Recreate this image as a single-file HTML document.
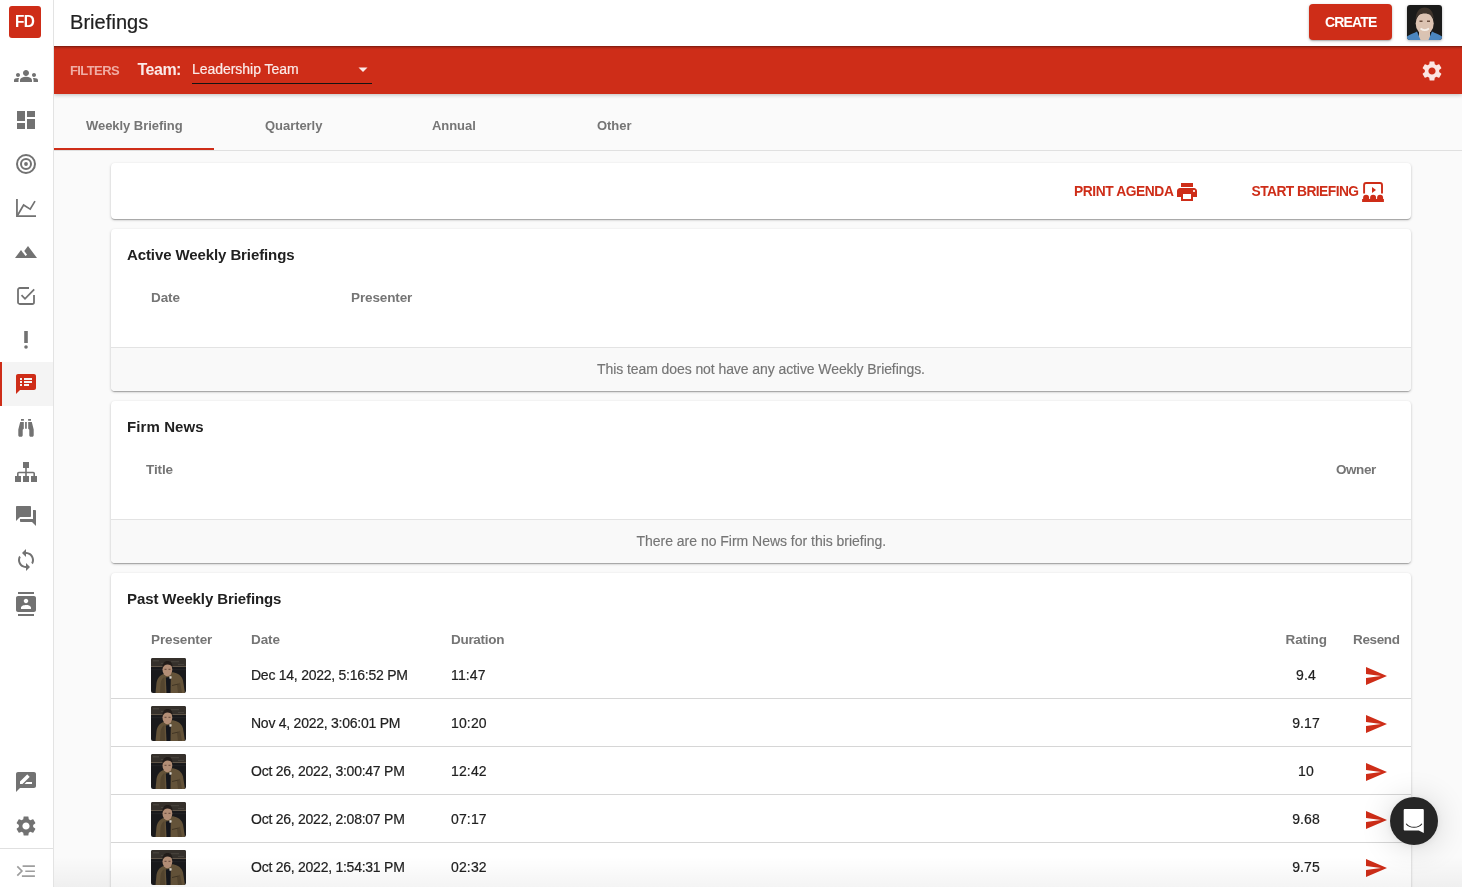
<!DOCTYPE html>
<html><head><meta charset="utf-8">
<style>
*{box-sizing:border-box;margin:0;padding:0}
html,body{width:1462px;height:887px;overflow:hidden;will-change:transform;background:#fafafa;font-family:"Liberation Sans",sans-serif;position:relative}
.a{position:absolute}
.t{position:absolute;white-space:nowrap;line-height:1}
.b{font-weight:bold}
#side{left:0;top:0;width:54px;height:887px;background:#fff;border-right:1px solid #e3e3e3}
#hdr{left:54px;top:0;width:1408px;height:46px;background:#fff}
#bar{left:54px;top:46px;width:1408px;height:48px;background:#ce2d18;z-index:2;box-shadow:0 1px 4px rgba(0,0,0,.24);clip-path:inset(0 0 -10px 0)}
#tabs{left:54px;top:94px;width:1408px;height:57px;background:#fafafa;border-bottom:1px solid #e0e0e0}
.card{position:absolute;left:111px;width:1300px;background:#fff;border-radius:4px;box-shadow:0 1px 3px rgba(0,0,0,.2),0 1px 1px rgba(0,0,0,.14),0 2px 1px -1px rgba(0,0,0,.12)}
.foot{position:absolute;left:0;width:1300px;height:44px;background:#f9f9f9;border-top:1px solid #e3e3e3;border-radius:0 0 4px 4px}
.gray{color:#757575}
.dark{color:#212121}
.dark:not(.b){-webkit-text-stroke:0.2px #212121}
.gray:not(.b){-webkit-text-stroke:0.15px #757575}
.ic{position:absolute;fill:#727272}
.row{position:absolute;left:0;width:1300px;height:1px;background:#d6d6d6}
</style></head><body><div id="root" style="position:absolute;left:0;top:0;width:1462px;height:887px;overflow:hidden">

<!-- sidebar -->
<div id="side" class="a">
  <div class="a" style="left:9px;top:6px;width:32px;height:32px;background:#ce2d18;border-radius:3px"></div>
  <div class="t b" style="left:15px;top:14px;font-size:16px;color:#fff;letter-spacing:-0.6px;transform:scaleX(.96);transform-origin:0 0">FD</div>

  <div class="a" style="left:0;top:362px;width:53px;height:44px;background:#f4f4f4"></div>
  <div class="a" style="left:0;top:362px;width:2px;height:44px;background:#ce2d18"></div>

  <!-- groups -->
  <svg class="ic" style="left:14px;top:64px" width="24" height="24" viewBox="0 0 24 24"><path d="M12 12.75c1.63 0 3.070.39 4.24.9 1.08.48 1.76 1.56 1.76 2.73V18H6v-1.61c0-1.18.68-2.26 1.760-2.73 1.17-.52 2.61-.91 4.240-.91zM4 13c1.1 0 2-.9 2-2s-.9-2-2-2-2 .9-2 2 .9 2 2 2zm1.13 1.1c-.37-.06-.74-.1-1.13-.1-.99 0-1.93.21-2.78.58C.48 14.9 0 15.62 0 16.43V18h4.5v-1.61c0-.83.23-1.61.63-2.29zM20 13c1.1 0 2-.9 2-2s-.9-2-2-2-2 .9-2 2 .9 2 2 2zm4 3.43c0-.81-.48-1.53-1.22-1.85-.85-.37-1.79-.58-2.78-.58-.39 0-.76.04-1.13.1.4.68.63 1.46.63 2.29V18H24v-1.57zM12 6c1.66 0 3 1.34 3 3s-1.34 3-3 3-3-1.34-3-3 1.34-3 3-3z"/></svg>
  <!-- dashboard -->
  <svg class="ic" style="left:14px;top:108px" width="24" height="24" viewBox="0 0 24 24"><path d="M3 13h8V3H3v10zm0 8h8v-6H3v6zm10 0h8V11h-8v10zm0-18v6h8V3h-8z"/></svg>
  <!-- target -->
  <svg class="ic" style="left:14px;top:152px" width="24" height="24" viewBox="0 0 24 24"><circle cx="12" cy="12" r="9" fill="none" stroke="#727272" stroke-width="2"/><circle cx="12" cy="12" r="5" fill="none" stroke="#727272" stroke-width="2"/><circle cx="12" cy="12" r="1.9"/></svg>
  <!-- chart -->
  <svg class="ic" style="left:14px;top:196px" width="24" height="24" viewBox="0 0 24 24"><path d="M2.95 3v17.15H22" fill="none" stroke="#727272" stroke-width="1.8"/><path d="M3.6 19.2L9.6 9l6.6 4.1 4.8-8" fill="none" stroke="#727272" stroke-width="1.7"/></svg>
  <!-- terrain -->
  <svg class="ic" style="left:14px;top:240px" width="24" height="24" viewBox="0 0 24 24"><path d="M14 6l-3.75 5 2.85 3.8-1.6 1.2C9.81 13.75 7 10 7 10l-6 8h22L14 6z"/></svg>
  <!-- checkbox -->
  <svg class="ic" style="left:14px;top:284px" width="24" height="24" viewBox="0 0 24 24"><path d="M15 4H5.8a1.8 1.8 0 0 0-1.8 1.8v12.4a1.8 1.8 0 0 0 1.8 1.8h12.4a1.8 1.8 0 0 0 1.8-1.8v-7.2" fill="none" stroke="#727272" stroke-width="1.8"/><path d="M7.5 11.2l3.5 3.6 9.2-9.4" fill="none" stroke="#727272" stroke-width="1.8"/></svg>
  <!-- priority -->
  <svg class="ic" style="left:14px;top:328px" width="24" height="24" viewBox="0 0 24 24"><circle cx="12" cy="19" r="1.8"/><path d="M10.2 3h3.6v12h-3.6z"/></svg>
  <!-- speaker notes (active) -->
  <svg class="ic" style="left:14px;top:372px;fill:#ce2d18" width="24" height="24" viewBox="0 0 24 24"><path d="M20 2H4c-1.1 0-2 .9-2 2v18l4-4h14c1.1 0 2-.9 2-2V4c0-1.1-.9-2-2-2zM8 8H6V6h2v2zm0 3H6V9h2v2zm0 3H6v-2h2v2zm10-6h-8V6h8v2zm0 3h-8V9h8v2zm-3 3h-5v-2h5v2z"/></svg>
  <!-- binoculars -->
  <svg class="ic" style="left:14px;top:416px" width="24" height="24" viewBox="0 0 24 24"><path d="M7 3h2.9v1.8H7zM14.1 3H17v1.8h-2.9zM11.1 6h1.7v6.7h-1.7zM6.2 6H9.8V12.8L8.7 13.8V19.3c0 .9-.6 1.5-1.5 1.5H5.8c-.9 0-1.5-.6-1.5-1.5V13.5zM17.8 6H14.2V12.8L15.3 13.8V19.3c0 .9.6 1.5 1.5 1.5H18.2c.9 0 1.5-.6 1.5-1.5V13.5z"/></svg>
  <!-- sitemap -->
  <svg class="ic" style="left:14px;top:460px" width="24" height="24" viewBox="0 0 24 24"><path d="M9 2h6v6H9zM1 16h6v6H1zM9 16h6v6H9zM17 16h6v6h-6z"/><path d="M12 8v8M3.8 16v-2.5c0-.6.4-1 1-1h14.4c.6 0 1 .4 1 1V16" fill="none" stroke="#727272" stroke-width="1.6"/></svg>
  <!-- forum -->
  <svg class="ic" style="left:14px;top:504px" width="24" height="24" viewBox="0 0 24 24"><path d="M21 6h-2v9H6v2c0 .55.45 1 1 1h11l4 4V7c0-.55-.45-1-1-1zm-4 6V3c0-.55-.45-1-1-1H3c-.55 0-1 .45-1 1v14l4-4h10c.55 0 1-.45 1-1z"/></svg>
  <!-- sync -->
  <svg class="ic" style="left:14px;top:548px" width="24" height="24" viewBox="0 0 24 24"><path d="M12 4V1L8 5l4 4V6c3.31 0 6 2.69 6 6 0 1.01-.25 1.97-.7 2.8l1.46 1.46C19.54 15.03 20 13.570 20 12c0-4.42-3.58-8-8-8zm0 14c-3.31 0-6-2.69-6-6 0-1.01.25-1.97.7-2.8L5.24 7.74C4.46 8.97 4 10.43 4 12c0 4.42 3.58 8 8 8v3l4-4-4-4v3z"/></svg>
  <!-- contacts -->
  <svg class="ic" style="left:14px;top:592px" width="24" height="24" viewBox="0 0 24 24"><path d="M20 0H4v2h16V0zM4 24h16v-2H4v2zM20 4H4c-1.1 0-2 .9-2 2v12c0 1.1.9 2 2 2h16c1.1 0 2-.9 2-2V6c0-1.1-.9-2-2-2zm-8 2.75c1.24 0 2.25 1.01 2.25 2.25s-1.01 2.25-2.25 2.25S9.75 10.24 9.75 9 10.76 6.75 12 6.75zM17 17H7v-1.5c0-1.67 3.33-2.5 5-2.5s5 .83 5 2.5V17z"/></svg>
  <!-- rate review -->
  <svg class="ic" style="left:14px;top:770px" width="24" height="24" viewBox="0 0 24 24"><path d="M20 2H4c-1.1 0-1.99.9-1.99 2L2 22l4-4h14c1.1 0 2-.9 2-2V4c0-1.1-.9-2-2-2zM6 14v-2.47l6.88-6.88c.2-.2.51-.2.71 0l1.77 1.77c.2.2.2.51 0 .71L8.47 14H6zm12 0h-7.5l2-2H18v2z"/></svg>
  <!-- settings -->
  <svg class="ic" style="left:14px;top:814px" width="24" height="24" viewBox="0 0 24 24"><path d="M19.14 12.94c.04-.3.06-.61.06-.94 0-.32-.02-.64-.07-.94l2.03-1.58c.18-.14.23-.41.12-.61l-1.92-3.32c-.12-.22-.37-.29-.59-.22l-2.39.96c-.5-.38-1.03-.7-1.62-.94l-.36-2.54c-.04-.24-.24-.41-.48-.41h-3.84c-.24 0-.43.17-.47.41l-.36 2.54c-.59.24-1.13.57-1.62.94l-2.39-.96c-.22-.08-.47 0-.59.22L2.74 8.87c-.12.21-.08.47.12.61l2.03 1.58c-.05.3-.09.63-.09.94s.02.64.07.94l-2.03 1.58c-.18.14-.23.41-.12.61l1.92 3.32c.12.22.37.29.59.22l2.39-.96c.5.38 1.03.7 1.62.94l.36 2.54c.05.24.24.41.48.41h3.84c.24 0 .44-.17.47-.41l.36-2.54c.59-.24 1.13-.56 1.62-.94l2.39.96c.22.08.47 0 .59-.22l1.92-3.32c.12-.22.07-.47-.12-.61l-2.01-1.58zM12 15.6c-1.98 0-3.6-1.62-3.6-3.6s1.62-3.6 3.6-3.6 3.6 1.62 3.6 3.6-1.62 3.6-3.6 3.6z"/></svg>
  <div class="a" style="left:0;top:848px;width:53px;height:1px;background:#e0e0e0"></div>
  <!-- collapse -->
  <svg class="ic" style="left:14px;top:859px" width="24" height="24" viewBox="0 0 24 24"><path d="M3.3 7.3l4.6 4.7-4.6 4.7" fill="none" stroke="#9e9e9e" stroke-width="1.7"/><path d="M8.6 6.3h12.3v1.7H8.6zM11.3 11.4h9.6v1.7h-9.6zM7.9 16.3h13v1.7h-13z" fill="#9e9e9e"/></svg>
</div>

<!-- header -->
<div id="hdr" class="a"></div>
<div class="t dark" style="left:70px;top:11.6px;font-size:20px;letter-spacing:0.06px">Briefings</div>
<div class="a" style="left:1309px;top:4px;width:83px;height:36px;background:#ce2d18;border-radius:4px;box-shadow:0 1px 3px rgba(0,0,0,.25),0 1px 1px rgba(0,0,0,.14)"></div>
<div class="t b" style="left:1325px;top:15px;font-size:14px;color:#fff;letter-spacing:-0.85px">CREATE</div>
<svg class="a" style="left:1407px;top:5px;border-radius:3px;box-shadow:0 1px 3px rgba(0,0,0,.3)" width="35" height="35" viewBox="0 0 35 35">
  <rect width="35" height="35" fill="#1b1b1a"/>
  <path d="M12 26h11v9H12z" fill="#d9c3b3"/>
  <path d="M0 35V31.5C3 29.500 7 28 10 26.5L13.5 35zM35 35V31.5C32 29.5 28 28 25 26.5L21.5 35z" fill="#4b86bf"/>
  <ellipse cx="17.7" cy="18.5" rx="9" ry="11" fill="#dcc3b2"/>
  <path d="M8.7 15C8.5 7 12.5 2.5 17.7 2.5S27 7 26.7 15C25.5 10.5 22 8.5 17.700 8.5S10 10.5 8.7 15z" fill="#3e342c"/>
  <path d="M12.5 16.2h3M20 16.2h3" stroke="#6b4e3e" stroke-width="1.4"/>
  <path d="M13.5 23.5Q17.7 26.8 22 23.5" stroke="#f4eee8" stroke-width="1.6" fill="none"/>
</svg>

<!-- red filter bar -->
<div id="bar" class="a"><div class="a" style="left:0;top:0;width:1408px;height:4px;background:linear-gradient(rgba(0,0,0,.42),rgba(0,0,0,.14) 40%,rgba(0,0,0,.03) 75%,rgba(0,0,0,0))"></div></div>
<div class="t b" style="z-index:3;left:70px;top:63.5px;font-size:13px;color:#f0aca3;letter-spacing:-0.6px">FILTERS</div>
<div class="t b" style="z-index:3;left:137.5px;top:62px;font-size:16px;color:#fbeae8;letter-spacing:-0.5px">Team:</div>
<div class="t" style="z-index:3;left:192px;top:62.2px;font-size:14px;color:#fbeae8;letter-spacing:-0.04px;-webkit-text-stroke:0.2px #fbeae8">Leadership Team</div>
<div class="a" style="left:192px;top:83px;width:180px;height:1px;background:#141414;z-index:3"></div>
<svg class="a" style="left:351px;top:58.5px;z-index:3" width="24" height="24" viewBox="0 0 24 24"><path d="M7.5 8.5l4.5 4.5 4.5-4.5z" fill="#fbeae8"/></svg>
<svg class="a" style="left:1420px;top:59px;z-index:3" width="24" height="24" viewBox="0 0 24 24"><path fill="#fbe6e3" d="M19.14 12.94c.04-.3.06-.61.06-.94 0-.32-.02-.64-.07-.94l2.03-1.58c.18-.14.23-.41.12-.61l-1.92-3.32c-.12-.22-.37-.29-.59-.22l-2.39.96c-.5-.38-1.03-.7-1.62-.94l-.36-2.54c-.04-.24-.24-.41-.48-.41h-3.84c-.24 0-.43.17-.47.41l-.36 2.54c-.59.24-1.130.57-1.62.94l-2.39-.96c-.22-.08-.47 0-.59.22L2.74 8.87c-.12.21-.08.47.12.61l2.03 1.58c-.05.3-.09.63-.09.94s.02.64.07.94l-2.03 1.58c-.18.14-.23.41-.12.61l1.92 3.32c.12.22.37.29.59.22l2.39-.96c.5.38 1.03.7 1.62.94l.36 2.54c.05.24.24.41.48.41h3.84c.24 0 .44-.17.47-.41l.36-2.54c.59-.24 1.13-.56 1.62-.94l2.39.96c.22.08.47 0 .59-.22l1.92-3.32c.12-.22.07-.47-.12-.61l-2.01-1.58zM12 15.6c-1.98 0-3.6-1.62-3.6-3.6s1.62-3.6 3.6-3.6 3.6 1.62 3.6 3.6-1.62 3.6-3.6 3.6z"/></svg>

<!-- tabs -->
<div id="tabs" class="a"></div>
<div class="a" style="left:54px;top:148px;width:160px;height:2px;background:#ce2d18"></div>
<div class="t b gray" style="left:86px;top:119px;font-size:13px;letter-spacing:-0.05px">Weekly Briefing</div>
<div class="t b gray" style="left:265px;top:119px;font-size:13px;letter-spacing:-0.05px">Quarterly</div>
<div class="t b gray" style="left:432px;top:119px;font-size:13px;letter-spacing:-0.05px">Annual</div>
<div class="t b gray" style="left:597px;top:119px;font-size:13px;letter-spacing:-0.05px">Other</div>

<!-- card 1 -->
<div class="card" style="top:163px;height:56px"></div>
<div class="t b" style="left:1074px;top:185px;font-size:13.8px;color:#ce2d18;letter-spacing:-0.42px">PRINT AGENDA</div>
<svg class="a" style="left:1175px;top:180px" width="24" height="24" viewBox="0 0 24 24"><path fill="#ce2d18" d="M19 8H5c-1.66 0-3 1.34-3 3v6h4v4h12v-4h4v-6c0-1.66-1.34-3-3-3zm-3 11H8v-5h8v5zm3-7c-.55 0-1-.45-1-1s.45-1 1-1 1 .45 1 1-.45 1-1 1zm-1-9H6v4h12V3z"/></svg>
<div class="t b" style="left:1251.5px;top:185px;font-size:13.8px;color:#ce2d18;letter-spacing:-0.55px">START BRIEFING</div>
<svg class="a" style="left:1361px;top:180px" width="24" height="24" viewBox="0 0 24 24"><path fill="none" stroke="#ce2d18" stroke-width="1.9" d="M3.1 13.4V5c0-1.1.9-2 2-2h13.9c1.1 0 2 .9 2 2v8.4"/><path fill="#ce2d18" d="M11 7l4 3-4 3z"/><path fill="#ce2d18" d="M2.1 20v-2.2a3 3 0 0 1 6 0V20zM9.1 20v-2.2a3 3 0 0 1 6 0V20zM16.1 20v-2.2a3 3 0 0 1 6 0V20zM1.1 19h21.8v3H1.1z"/></svg>

<!-- card 2 -->
<div class="card" style="top:229px;height:162px"><div class="foot" style="top:118px"></div></div>
<div class="t b dark" style="left:127px;top:247px;font-size:15px;letter-spacing:-0.1px">Active Weekly Briefings</div>
<div class="t b gray" style="left:151px;top:291px;font-size:13.5px;letter-spacing:-0.12px">Date</div>
<div class="t b gray" style="left:351px;top:291px;font-size:13.5px;letter-spacing:-0.12px">Presenter</div>
<div class="t gray" style="left:597px;top:362.2px;font-size:14px;letter-spacing:-0.08px">This team does not have any active Weekly Briefings.</div>

<!-- card 3 -->
<div class="card" style="top:401px;height:162px"><div class="foot" style="top:118px"></div></div>
<div class="t b dark" style="left:127px;top:419px;font-size:15px;letter-spacing:0.1px">Firm News</div>
<div class="t b gray" style="left:146px;top:463px;font-size:13.5px;letter-spacing:-0.12px">Title</div>
<div class="t b gray" style="left:1336px;top:463px;font-size:13.5px;letter-spacing:-0.45px">Owner</div>
<div class="t gray" style="left:636.5px;top:534px;font-size:14px;letter-spacing:-0.02px">There are no Firm News for this briefing.</div>

<!-- card 4 -->
<div class="card" style="top:573px;height:340px">
  <div class="row" style="top:125px"></div>
  <div class="row" style="top:173px"></div>
  <div class="row" style="top:221px"></div>
  <div class="row" style="top:269px"></div>
</div>
<div class="t b dark" style="left:127px;top:591px;font-size:15px;letter-spacing:-0.1px">Past Weekly Briefings</div>
<div class="t b gray" style="left:151px;top:633px;font-size:13.5px;letter-spacing:-0.12px">Presenter</div>
<div class="t b gray" style="left:251px;top:633px;font-size:13.5px;letter-spacing:-0.12px">Date</div>
<div class="t b gray" style="left:451px;top:633px;font-size:13.5px;letter-spacing:-0.3px">Duration</div>
<div class="t b gray" style="left:1285.5px;top:633px;font-size:13.5px;letter-spacing:-0.12px">Rating</div>
<div class="t b gray" style="left:1353px;top:633px;font-size:13.5px;letter-spacing:-0.35px">Resend</div>

<!--ROWS-->
<svg width="0" height="0" style="position:absolute"><defs>
<symbol id="pp" viewBox="0 0 35 35">
<rect width="35" height="35" fill="#19191b"/>
<rect width="35" height="8.6" fill="#35302b"/>
<path d="M2 2h6v1.5H2zM20 3h8v1.2h-8zM10 5h5v1h-5zM27 6h6v1h-6z" fill="#45403a"/>
<rect y="8.2" width="35" height="0.8" fill="#6e6252"/>
<rect y="11.5" width="35" height="0.6" fill="#2a2a2c"/>
<path d="M4.5 35L5.5 25C6.5 19.5 9 17.500 12.5 16L22 14.2C27 15 30.5 17.5 32 22.5L34 35z" fill="#645339"/>
<path d="M9 35L9.5 26C10 22 11.500 20 13.5 19L14 35zM27 35L26 27 29 24.5 31 35z" fill="#54452f"/>
<path d="M14.8 19.5L19.8 18.8 19.5 35 15.5 35z" fill="#14161c"/>
<path d="M18.2 18.5l2.2-.4.3 2.200-2 .6z" fill="#d8d4cc"/>
<path d="M21 27.5l6.5-1.5" stroke="#3d3223" stroke-width="0.9"/>
<ellipse cx="16.4" cy="11.6" rx="4.9" ry="6.6" fill="#b38e76"/>
<path d="M11.5 10.5C11 5.5 13.5 3 16.5 3S21.8 5 21.5 9.5C20.5 7.200 18.800 6.5 16.5 6.5S12.5 8 11.5 10.5z" fill="#221c19"/>
<path d="M13.5 11.3h2M17.5 11.3h2" stroke="#5a4034" stroke-width="0.9"/>
</symbol></defs></svg>
<svg class="a" style="left:151px;top:658px;border-radius:2px" width="35" height="35"><use href="#pp"/></svg>
<div class="t dark" style="left:251px;top:668px;font-size:14px;letter-spacing:-0.25px">Dec 14, 2022, 5:16:52 PM</div>
<div class="t dark" style="left:451px;top:668px;font-size:14px;letter-spacing:0.15px">11:47</div>
<div class="t dark" style="left:1256px;width:100px;text-align:center;top:668px;font-size:14px;letter-spacing:0.1px">9.4</div>
<svg class="a" style="left:1364px;top:664px" width="24" height="24" viewBox="0 0 24 24"><path fill="#ce2d18" d="M2.01 21L23 12 2.01 3 2 10l15 2-15 2z"/></svg>
<svg class="a" style="left:151px;top:706px;border-radius:2px" width="35" height="35"><use href="#pp"/></svg>
<div class="t dark" style="left:251px;top:716px;font-size:14px;letter-spacing:-0.25px">Nov 4, 2022, 3:06:01 PM</div>
<div class="t dark" style="left:451px;top:716px;font-size:14px;letter-spacing:0.15px">10:20</div>
<div class="t dark" style="left:1256px;width:100px;text-align:center;top:716px;font-size:14px;letter-spacing:0.1px">9.17</div>
<svg class="a" style="left:1364px;top:712px" width="24" height="24" viewBox="0 0 24 24"><path fill="#ce2d18" d="M2.01 21L23 12 2.01 3 2 10l15 2-15 2z"/></svg>
<svg class="a" style="left:151px;top:754px;border-radius:2px" width="35" height="35"><use href="#pp"/></svg>
<div class="t dark" style="left:251px;top:764px;font-size:14px;letter-spacing:-0.25px">Oct 26, 2022, 3:00:47 PM</div>
<div class="t dark" style="left:451px;top:764px;font-size:14px;letter-spacing:0.15px">12:42</div>
<div class="t dark" style="left:1256px;width:100px;text-align:center;top:764px;font-size:14px;letter-spacing:0.1px">10</div>
<svg class="a" style="left:1364px;top:760px" width="24" height="24" viewBox="0 0 24 24"><path fill="#ce2d18" d="M2.01 21L23 12 2.01 3 2 10l15 2-15 2z"/></svg>
<svg class="a" style="left:151px;top:802px;border-radius:2px" width="35" height="35"><use href="#pp"/></svg>
<div class="t dark" style="left:251px;top:812px;font-size:14px;letter-spacing:-0.25px">Oct 26, 2022, 2:08:07 PM</div>
<div class="t dark" style="left:451px;top:812px;font-size:14px;letter-spacing:0.15px">07:17</div>
<div class="t dark" style="left:1256px;width:100px;text-align:center;top:812px;font-size:14px;letter-spacing:0.1px">9.68</div>
<svg class="a" style="left:1364px;top:808px" width="24" height="24" viewBox="0 0 24 24"><path fill="#ce2d18" d="M2.01 21L23 12 2.01 3 2 10l15 2-15 2z"/></svg>
<svg class="a" style="left:151px;top:850px;border-radius:2px" width="35" height="35"><use href="#pp"/></svg>
<div class="t dark" style="left:251px;top:860px;font-size:14px;letter-spacing:-0.25px">Oct 26, 2022, 1:54:31 PM</div>
<div class="t dark" style="left:451px;top:860px;font-size:14px;letter-spacing:0.15px">02:32</div>
<div class="t dark" style="left:1256px;width:100px;text-align:center;top:860px;font-size:14px;letter-spacing:0.1px">9.75</div>
<svg class="a" style="left:1364px;top:856px" width="24" height="24" viewBox="0 0 24 24"><path fill="#ce2d18" d="M2.01 21L23 12 2.01 3 2 10l15 2-15 2z"/></svg>
<!--/ROWS-->
<!-- chat -->
<div class="a" style="left:1390px;top:797px;width:48px;height:48px;border-radius:50%;background:#262626;box-shadow:0 1px 6px rgba(0,0,0,.06),0 2px 32px rgba(0,0,0,.16)"></div>
<svg class="a" style="left:1402px;top:808px" width="24" height="26" viewBox="0 0 24 26"><path fill="#fff" d="M3 1h17.5c.8 0 1.3.5 1.3 1.300V25l-5-2.5H3c-.8 0-1.3-.5-1.3-1.3V2.3C1.7 1.5 2.200 1 3 1z"/><path d="M4.2 15.7c3.5 4.8 12.2 4.8 15.7 0" stroke="#262626" stroke-width="1.1" fill="none"/></svg>

<!-- bottom fade -->
<div class="a" style="left:54px;top:857px;width:1408px;height:30px;background:linear-gradient(rgba(0,0,0,0),rgba(0,0,0,.045))"></div>
</div></body></html>
